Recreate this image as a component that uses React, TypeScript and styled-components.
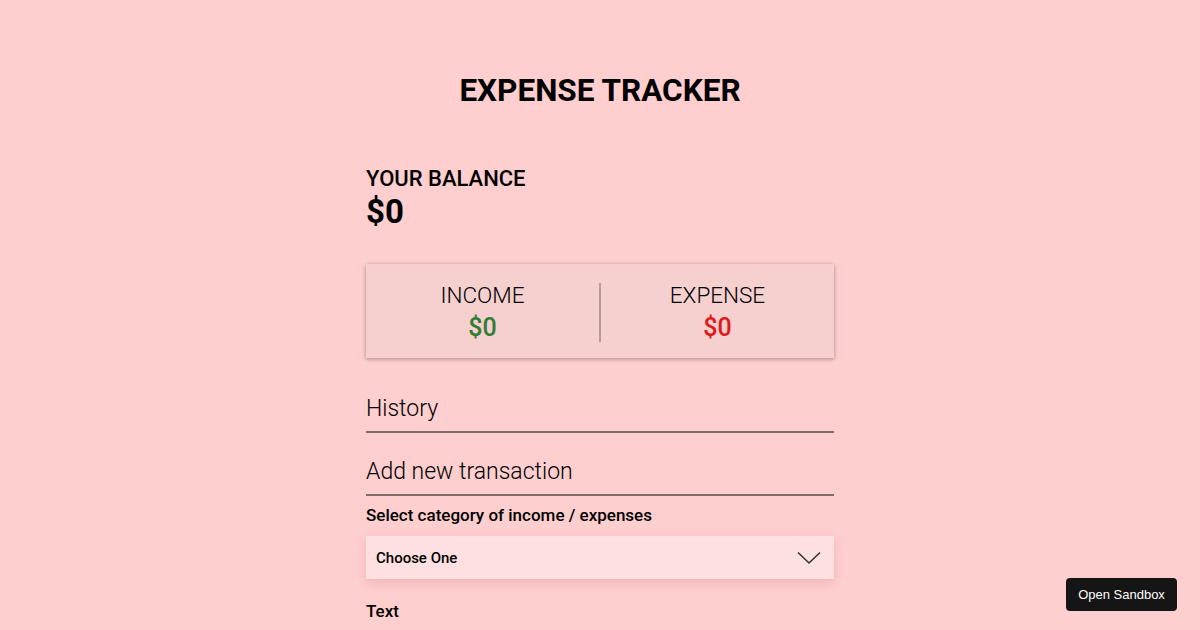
import styled, { createGlobalStyle } from 'styled-components';

const GlobalStyle = createGlobalStyle`
  body {
    margin: 0;
    background: #ffcece;
    font-family: Roboto, "Noto Sans", sans-serif;
    color: #000;
  }
`;

function App() {
  return (
    <>
      <GlobalStyle />
      <Page>
        <Title>EXPENSE TRACKER</Title>
        <Container>
          <BalanceLabel>YOUR BALANCE</BalanceLabel>
          <BalanceValue>$0</BalanceValue>

          <SummaryCard>
            <SummaryCol>
              <SummaryLabel>INCOME</SummaryLabel>
              <SummaryValue $kind="income">$0</SummaryValue>
            </SummaryCol>
            <Divider />
            <SummaryCol>
              <SummaryLabel>EXPENSE</SummaryLabel>
              <SummaryValue $kind="expense">$0</SummaryValue>
            </SummaryCol>
          </SummaryCard>

          <SectionTitle>History</SectionTitle>
          <SectionTitle>Add new transaction</SectionTitle>

          <FieldLabel>Select category of income / expenses</FieldLabel>
          <SelectBox>
            <span>Choose One</span>
            <svg width="24" height="14" viewBox="0 0 24 14" fill="none">
              <polyline
                points="1,1.5 12,12 23,1.5"
                stroke="#333"
                strokeWidth="1.6"
              />
            </svg>
          </SelectBox>
          <FieldLabel $top={21}>Text</FieldLabel>
        </Container>
      </Page>
      <SandboxButton>Open Sandbox</SandboxButton>
    </>
  );
}

export default App;

const Page = styled.div`
  display: flex;
  flex-direction: column;
  align-items: center;
  padding-top: 71px;
`;

const Title = styled.h1`
  margin: 0;
  font-size: 31.5px;
  font-weight: 700;
  line-height: 40px;
`;

const Container = styled.div`
  width: 468px;
  display: flex;
  flex-direction: column;
  margin-top: 54px;
`;

const BalanceLabel = styled.h4`
  margin: 0;
  font-size: 22px;
  font-weight: 500;
  line-height: 28px;
`;

const BalanceValue = styled.h2`
  margin: 0;
  font-size: 33px;
  font-weight: 700;
  line-height: 38px;
`;

const SummaryCard = styled.div`
  margin-top: 33px;
  background: #f6cfcf;
  box-shadow: 0 1px 4px rgba(0, 0, 0, 0.35);
  display: flex;
  align-items: center;
  padding: 17px 0 15px;
`;

const SummaryCol = styled.div`
  flex: 1;
  display: flex;
  flex-direction: column;
  align-items: center;
`;

const Divider = styled.div`
  width: 2px;
  height: 59px;
  background: #b89a9a;
`;

const SummaryLabel = styled.div`
  font-size: 22.5px;
  font-weight: 300;
  line-height: 28px;
`;

const SummaryValue = styled.div<{ $kind: 'income' | 'expense' }>`
  margin-top: 4px;
  font-size: 25px;
  font-weight: 500;
  line-height: 30px;
  color: ${(p) => (p.$kind === 'income' ? '#2e7d32' : '#e01919')};
`;

const SectionTitle = styled.h3`
  margin: 0;
  padding-top: 37px;
  padding-bottom: 8px;
  font-size: 23px;
  font-weight: 300;
  line-height: 28px;
  border-bottom: 2px solid #806c6c;

  & + & {
    padding-top: 25px;
  }
`;

const FieldLabel = styled.label<{ $top?: number }>`
  display: block;
  margin-top: ${(p) => p.$top ?? 8}px;
  font-size: 17px;
  font-weight: 500;
  line-height: 22px;
`;

const SelectBox = styled.div`
  margin-top: 10px;
  height: 43px;
  background: #ffe0e0;
  box-shadow: 0 4px 10px rgba(160, 80, 80, 0.18);
  display: flex;
  align-items: center;
  justify-content: space-between;
  padding: 0 13px 0 10px;
  font-size: 15px;
  font-weight: 500;
`;

const SandboxButton = styled.button`
  position: fixed;
  right: 23px;
  bottom: 19px;
  width: 111px;
  height: 33px;
  border: none;
  border-radius: 4px;
  background: #151515;
  color: #fff;
  font-family: "Liberation Sans", Arial, sans-serif;
  font-size: 13px;
`;
